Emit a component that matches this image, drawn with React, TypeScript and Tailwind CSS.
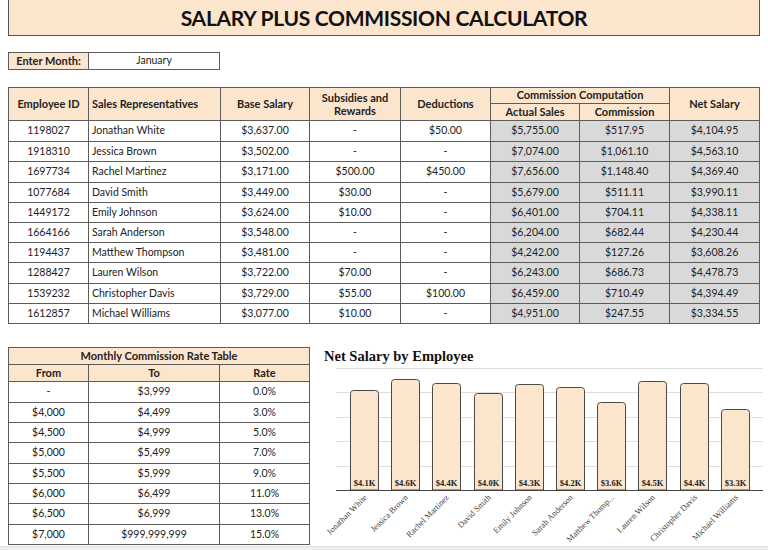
import React from 'react';

interface Employee {
    id: string;
    name: string;
    short: string;
    base: string;
    subsidies: string;
    deductions: string;
    sales: string;
    commission: string;
    net: string;
    netValue: number;
}

const employees: Employee[] = [
    { id: '1198027', name: 'Jonathan White', short: 'Jonathan White', base: '$3,637.00', subsidies: '-', deductions: '$50.00', sales: '$5,755.00', commission: '$517.95', net: '$4,104.95', netValue: 4104.95 },
    { id: '1918310', name: 'Jessica Brown', short: 'Jessica Brown', base: '$3,502.00', subsidies: '-', deductions: '-', sales: '$7,074.00', commission: '$1,061.10', net: '$4,563.10', netValue: 4563.1 },
    { id: '1697734', name: 'Rachel Martinez', short: 'Rachel Martinez', base: '$3,171.00', subsidies: '$500.00', deductions: '$450.00', sales: '$7,656.00', commission: '$1,148.40', net: '$4,369.40', netValue: 4369.4 },
    { id: '1077684', name: 'David Smith', short: 'David Smith', base: '$3,449.00', subsidies: '$30.00', deductions: '-', sales: '$5,679.00', commission: '$511.11', net: '$3,990.11', netValue: 3990.11 },
    { id: '1449172', name: 'Emily Johnson', short: 'Emily Johnson', base: '$3,624.00', subsidies: '$10.00', deductions: '-', sales: '$6,401.00', commission: '$704.11', net: '$4,338.11', netValue: 4338.11 },
    { id: '1664166', name: 'Sarah Anderson', short: 'Sarah Anderson', base: '$3,548.00', subsidies: '-', deductions: '-', sales: '$6,204.00', commission: '$682.44', net: '$4,230.44', netValue: 4230.44 },
    { id: '1194437', name: 'Matthew Thompson', short: 'Matthew Thomp...', base: '$3,481.00', subsidies: '-', deductions: '-', sales: '$4,242.00', commission: '$127.26', net: '$3,608.26', netValue: 3608.26 },
    { id: '1288427', name: 'Lauren Wilson', short: 'Lauren Wilson', base: '$3,722.00', subsidies: '$70.00', deductions: '-', sales: '$6,243.00', commission: '$686.73', net: '$4,478.73', netValue: 4478.73 },
    { id: '1539232', name: 'Christopher Davis', short: 'Christopher Davis', base: '$3,729.00', subsidies: '$55.00', deductions: '$100.00', sales: '$6,459.00', commission: '$710.49', net: '$4,394.49', netValue: 4394.49 },
    { id: '1612857', name: 'Michael Williams', short: 'Michael Williams', base: '$3,077.00', subsidies: '$10.00', deductions: '-', sales: '$4,951.00', commission: '$247.55', net: '$3,334.55', netValue: 3334.55 },
];

const rates = [
    { from: '-', to: '$3,999', rate: '0.0%' },
    { from: '$4,000', to: '$4,499', rate: '3.0%' },
    { from: '$4,500', to: '$4,999', rate: '5.0%' },
    { from: '$5,000', to: '$5,499', rate: '7.0%' },
    { from: '$5,500', to: '$5,999', rate: '9.0%' },
    { from: '$6,000', to: '$6,499', rate: '11.0%' },
    { from: '$6,500', to: '$6,999', rate: '13.0%' },
    { from: '$7,000', to: '$999,999,999', rate: '15.0%' },
];

// row heights so the dividers land where the sheet puts them
const empRowH = ['h-[21px]', 'h-[20px]', 'h-[21px]', 'h-[20px]', 'h-[20px]', 'h-[20px]', 'h-[20px]', 'h-[21px]', 'h-[20px]', 'h-[20px]'];
const rateRowH = ['h-[21px]', 'h-[20px]', 'h-[20px]', 'h-[21px]', 'h-[20px]', 'h-[20px]', 'h-[21px]', 'h-[20px]'];

const cell = 'border-r border-b border-[#5c5c5c] flex items-center justify-center';
const head = `${cell} bg-[#fce5cd] font-bold text-[11px]`;
const gray = `${cell} bg-[#d9d9d9]`;

const NetSalaryChart: React.FC = () => {
    const axisY = 490;
    const scale = 122 / 5000;
    const grid = [368, 392, 417, 441, 466];

    return (
        <svg width={458} height={181} viewBox="310 365 458 181" className="block">
            {grid.map((y) => (
                <line key={y} x1={335} x2={762} y1={y + 0.5} y2={y + 0.5} stroke="#dedede" strokeWidth={1} />
            ))}
            {employees.map((e, i) => {
                const x = Math.round(349 + i * 41.2) + 0.5;
                const w = 28;
                const t = Math.round(axisY - e.netValue * scale) + 0.5;
                const r = 3;
                const d = `M${x},${axisY} V${t + r} Q${x},${t} ${x + r},${t} H${x + w - r} Q${x + w},${t} ${x + w},${t + r} V${axisY} Z`;
                const cx = x + w / 2;
                return (
                    <g key={e.id}>
                        <path d={d} fill="#fce5cd" stroke="#4a4a4a" strokeWidth={1} />
                        <text x={cx} y={486} textAnchor="middle" fontFamily="'Liberation Serif', serif" fontWeight="bold" fontSize={8.5} fill="#222">
                            {'$' + (e.netValue / 1000).toFixed(1) + 'K'}
                        </text>
                        <text
                            x={cx + 3}
                            y={498}
                            textAnchor="end"
                            transform={`rotate(-45 ${cx + 3} 498)`}
                            fontFamily="'Liberation Serif', serif"
                            fontSize={8.5}
                            fill="#444"
                        >
                            {e.short}
                        </text>
                    </g>
                );
            })}
            <line x1={335} x2={762} y1={axisY + 0.5} y2={axisY + 0.5} stroke="#444" strokeWidth={1} />
        </svg>
    );
};

const App: React.FC = () => {
    return (
        <div className="w-[768px] h-[550px] overflow-hidden bg-white text-[#222] text-[10.5px] font-['Lato',sans-serif]">
            {/* Title */}
            <div className="ml-2 w-[752px] h-[36px] border-x border-b border-[#555] bg-[#fce5cd] flex items-center justify-center">
                <h1 className="text-[21px] font-bold text-[#111] tracking-[-0.3px]">SALARY PLUS COMMISSION CALCULATOR</h1>
            </div>

            {/* Month input */}
            <div className="ml-2 mt-4 grid grid-cols-[80px_131px] w-[212px] border-l border-t border-[#5c5c5c]">
                <div className={`${head} h-[17px]`}>Enter Month:</div>
                <div className={`${cell} h-[17px]`}>January</div>
            </div>

            {/* Salary table */}
            <div className="ml-2 mt-[17px] w-[752px] grid grid-cols-[80px_132px_89px_91px_90px_89px_90px_90px] grid-rows-[16px_17px] border-l border-t border-[#5c5c5c]">
                <div className={`${head} row-span-2`}>Employee ID</div>
                <div className={`${head} row-span-2 !justify-start pl-[3px]`}>Sales Representatives</div>
                <div className={`${head} row-span-2`}>Base Salary</div>
                <div className={`${head} row-span-2 text-center leading-[13px]`}>Subsidies and<br />Rewards</div>
                <div className={`${head} row-span-2`}>Deductions</div>
                <div className={`${head} col-span-2`}>Commission Computation</div>
                <div className={`${head} row-span-2`}>Net Salary</div>
                <div className={head}>Actual Sales</div>
                <div className={head}>Commission</div>

                {employees.map((e, i) => (
                    <React.Fragment key={e.id}>
                        <div className={`${cell} ${empRowH[i]}`}>{e.id}</div>
                        <div className={`${cell} ${empRowH[i]} !justify-start pl-[3px]`}>{e.name}</div>
                        <div className={`${cell} ${empRowH[i]}`}>{e.base}</div>
                        <div className={`${cell} ${empRowH[i]}`}>{e.subsidies}</div>
                        <div className={`${cell} ${empRowH[i]}`}>{e.deductions}</div>
                        <div className={`${gray} ${empRowH[i]}`}>{e.sales}</div>
                        <div className={`${gray} ${empRowH[i]}`}>{e.commission}</div>
                        <div className={`${gray} ${empRowH[i]}`}>{e.net}</div>
                    </React.Fragment>
                ))}
            </div>

            {/* Rate table + chart */}
            <div className="mt-[23px] flex">
                <div className="ml-2 w-[302px] self-start grid grid-cols-[80px_131px_90px] border-l border-t border-[#5c5c5c]">
                    <div className={`${head} col-span-3 h-[17px]`}>Monthly Commission Rate Table</div>
                    <div className={`${head} h-[17px]`}>From</div>
                    <div className={`${head} h-[17px]`}>To</div>
                    <div className={`${head} h-[17px]`}>Rate</div>
                    {rates.map((r, i) => (
                        <React.Fragment key={r.rate}>
                            <div className={`${cell} ${rateRowH[i]}`}>{r.from}</div>
                            <div className={`${cell} ${rateRowH[i]}`}>{r.to}</div>
                            <div className={`${cell} ${rateRowH[i]}`}>{r.rate}</div>
                        </React.Fragment>
                    ))}
                </div>

                <div className="ml-px flex flex-col">
                    <div className="pl-[13px] h-[18px] leading-[18px] text-[14.5px] font-bold text-[#111] font-['Liberation_Serif',serif]">
                        Net Salary by Employee
                    </div>
                    <NetSalaryChart />
                </div>
            </div>

            <div className="h-[4px] bg-[#eeeeee] border-t border-[#e2e2e2]" />
        </div>
    );
};

export default App;
